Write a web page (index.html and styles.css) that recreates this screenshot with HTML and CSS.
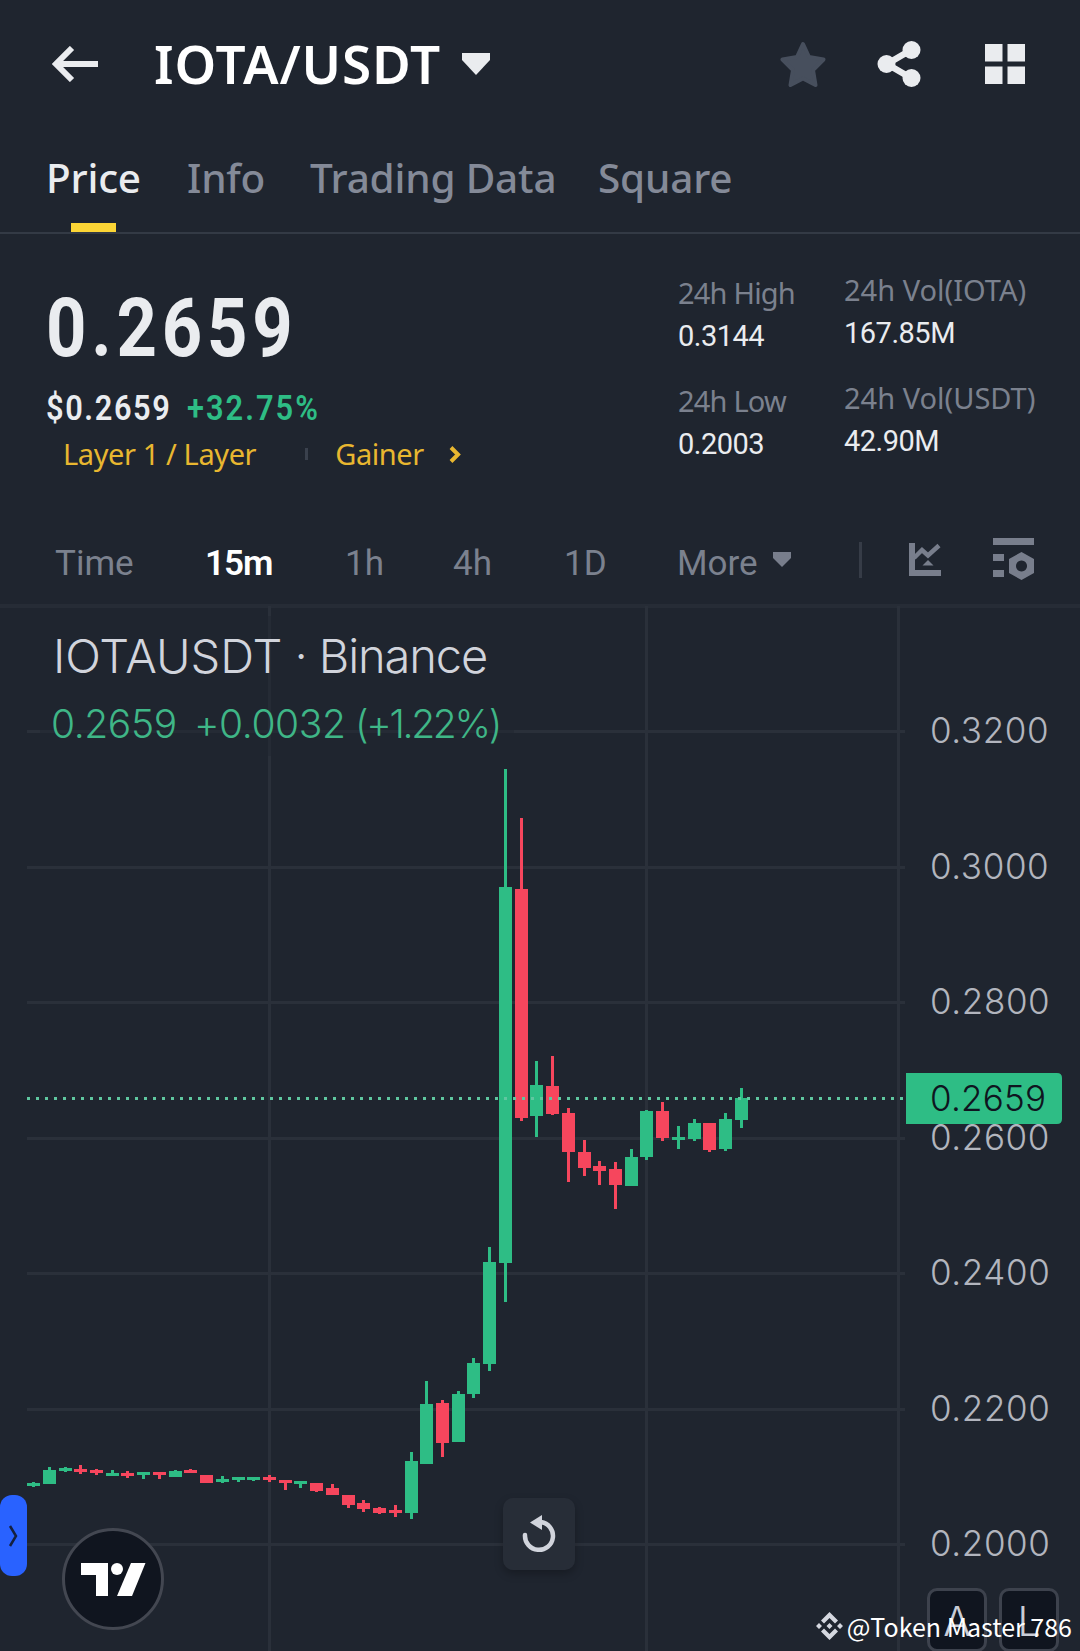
FILE: index.html
```
<!DOCTYPE html>
<html lang="en">
  <head>
    <meta charset="UTF-8" />
    <meta name="viewport" content="width=device-width, initial-scale=1.0" />
    <title>IOTA/USDT</title>
    <link rel="stylesheet" href="styles.css">
  </head>
  <body>
    <header class="header">
      <svg class="back" width="46" height="36" viewBox="0 0 46 36">
        <path d="M20 2 L4 18 L20 34 M4 18 H46" fill="none" stroke="#eaecef" stroke-width="6" />
      </svg>
      <h1 class="pair">IOTA/USDT</h1>
      <svg class="caret" width="28" height="22" viewBox="0 0 28 22">
        <path d="M0 0 H28 V7 L14 22 L0 7 Z" fill="#eaecef" />
      </svg>
      <div class="actions">
        <svg width="46" height="48" viewBox="0 0 46 48">
          <path d="M23 4 L29 17 L43.500 19.500 L33 30 L35.500 45 L23 38.500 L10.500 45 L13 30 L2.500 19.500 L17 17 Z" fill="#474f5d" stroke="#474f5d" stroke-width="4" stroke-linejoin="round" />
        </svg>
        <svg width="44" height="48" viewBox="0 0 44 48">
          <path d="M34 10 L10 24 L34 38" fill="none" stroke="#eaecef" stroke-width="6.500" />
          <circle cx="34.500" cy="10" r="9" fill="#eaecef" />
          <circle cx="9.500" cy="24" r="9" fill="#eaecef" />
          <circle cx="34.500" cy="38" r="9" fill="#eaecef" />
        </svg>
        <svg width="40" height="40" viewBox="0 0 40 40">
          <path d="M0 0h17.500v17.500H0zM22.500 0H40v17.500H22.500zM0 22.500h17.500V40H0zM22.500 22.500H40V40H22.500z" fill="#eaecef" />
        </svg>
      </div>
    </header>

    <nav class="tabs">
      <a class="tab active">Price</a>
      <a class="tab">Info</a>
      <a class="tab">Trading Data</a>
      <a class="tab">Square</a>
    </nav>

    <section class="summary">
      <div class="quote">
        <div class="last-price">0.2659</div>
        <div class="sub-price">
          <span class="usd">$0.2659</span>
          <span class="change">+32.75%</span>
        </div>
        <div class="tags">
          <span>Layer 1 / Layer</span>
          <i class="tag-sep"></i>
          <span>Gainer</span>
          <svg width="12" height="17" viewBox="0 0 12 17"><path d="M2 1.500 L9 8.500 L2 15.500" fill="none" stroke="#e8b730" stroke-width="4" /></svg>
        </div>
      </div>
      <div class="stats">
        <div class="stat-col">
          <div class="stat"><label>24h High</label><b>0.3144</b></div>
          <div class="stat"><label>24h Low</label><b>0.2003</b></div>
        </div>
        <div class="stat-col">
          <div class="stat"><label>24h Vol(IOTA)</label><b>167.85M</b></div>
          <div class="stat"><label>24h Vol(USDT)</label><b>42.90M</b></div>
        </div>
      </div>
    </section>

    <div class="intervals">
      <span>Time</span>
      <span class="active">15m</span>
      <span>1h</span>
      <span>4h</span>
      <span>1D</span>
      <span>More</span>
      <svg width="18" height="15" viewBox="0 0 18 15"><path d="M0 0 H18 V6 L9 15 L0 6 Z" fill="#787e8c" /></svg>
      <i class="bar-sep"></i>
      <svg width="33" height="33" viewBox="0 0 33 33" fill="#787e8c">
        <path d="M0 0 H6 V27 H32 V33 H0 Z" />
        <path d="M5 15 L13 7 L19 12.500 L30 2.500" fill="none" stroke="#787e8c" stroke-width="4.500" />
        <path d="M19 17 L24.500 22.500 H13.500 Z" />
      </svg>
      <svg width="41" height="43" viewBox="0 0 41 43" fill="#787e8c">
        <path d="M0 0 H41 V7 H0 Z M0 16 H11 V23 H0 Z M0 32 H11 V39 H0 Z" />
        <path fill-rule="evenodd" d="M28.500 14 L41 21 V35 L28.500 42 L16 35 V21 Z M28.500 22.500 a5.500 5.500 0 1 0 .01 0 Z" />
      </svg>
    </div>

    <main class="chart">
      <svg width="1080" height="1047" viewBox="0 604 1080 1047">
        <path class="top-line" d="M0 606 H1080" />
        <g class="grid">
          <path d="M269.500 606 V1651 M646.500 606 V1651 M898.500 606 V1651" />
          <path d="M27 731.500 H905 M27 867.500 H905 M27 1002.500 H905 M27 1138.500 H905 M27 1273.500 H905 M27 1409.500 H905 M27 1544.500 H905" />
        </g>
        <rect class="legend-bg" x="40" y="616" width="474" height="140" />
        <text class="symbol" x="53" y="673">IOTAUSDT<tspan class="exchange"> · Binance</tspan></text>
        <g class="ohlc">
          <text x="51" y="738">0.2659</text>
          <text x="194" y="738">+0.0032</text>
          <text class="percent" x="355" y="738">(+1.22%)</text>
        </g>
        <g id="candles"></g>
        <path class="last-line" d="M27 1098.500 H904" />
        <g class="axis">
          <text x="930" y="743">0.3200</text>
          <text x="930" y="879">0.3000</text>
          <text x="930" y="1014">0.2800</text>
          <text x="930" y="1150">0.2600</text>
          <text x="930" y="1285">0.2400</text>
          <text x="930" y="1421">0.2200</text>
          <text x="930" y="1556">0.2000</text>
        </g>
        <path class="last-tag" d="M906 1073 H1057 q5 0 5 5 V1119 q0 5 -5 5 H906 Z" />
        <text class="last-text" x="930" y="1111">0.2659</text>
      </svg>

      <div class="drawer">
        <svg width="10" height="24" viewBox="0 0 10 24"><path d="M2 2 L8 12 L2 22" fill="none" stroke="#14203f" stroke-width="2.500" /></svg>
      </div>
      <div class="tv-logo">
        <svg width="65" height="33" viewBox="0 0 65 33" fill="#fff">
          <path d="M0 0 H27 V33 H15 V12 H0 Z" />
          <circle cx="36" cy="6" r="6" />
          <path d="M50 0 H64.500 L51 33 H36 Z" />
        </svg>
      </div>
      <div class="reset">
        <svg width="34" height="38" viewBox="0 0 34 38">
          <path d="M3 20 A14 14 0 1 0 19 7" fill="none" stroke="#d1d4dc" stroke-width="4.500" stroke-linecap="round" />
          <path d="M8 7.500 L20 0 V15 Z" fill="#d1d4dc" />
        </svg>
      </div>
      <div class="scale-btns">
        <div class="scale-btn">A</div>
        <div class="scale-btn">L</div>
      </div>
      <div class="watermark">
        <svg width="27" height="28" viewBox="-13.500 -14 27 28" fill="#d5d8e0">
          <path d="M0 -14 L8.500 -5.500 L5.500 -2.500 L0 -8 L-5.500 -2.500 L-8.500 -5.500 Z" />
          <path d="M0 14 L8.500 5.500 L5.500 2.500 L0 8 L-5.500 2.500 L-8.500 5.500 Z" />
          <path d="M-10.500 -3 L-7.500 0 L-10.500 3 L-13.500 0 Z M10.500 -3 L13.500 0 L10.500 3 L7.500 0 Z M0 -3 L3 0 L0 3 L-3 0 Z" />
        </svg>
        <span>@Token Master 786</span>
      </div>
    </main>

    <script src="chart.js"></script>
  </body>
</html>
```
FILE: styles.css
```
* {
  box-sizing: border-box;
}
body {
  margin: 0;
  width: 1080px;
  height: 1651px;
  overflow: hidden;
  background-color: #1f252f;
  color: #eaecef;
  font-family: "Noto Sans", sans-serif;
}
svg {
  display: block;
  flex: none;
}
.header {
  display: flex;
  align-items: center;
  height: 128px;
  padding: 0 55px 0 52px;
}
.pair {
  margin: 0 0 0 56px;
  font-size: 53px;
  font-weight: 600;
  line-height: 72px;
  letter-spacing: 0.9px;
  color: #fff;
}
.caret {
  margin-left: 21px;
}
.actions {
  display: flex;
  align-items: center;
  margin-left: auto;
}
.actions svg:nth-child(2) {
  margin: 0 64px 0 51px;
}
.tabs {
  display: grid;
  grid-template-columns: 141px 123px 288px 200px;
  height: 106px;
  padding-left: 46px;
  border-bottom: 2px solid #333a45;
}
.tab {
  position: relative;
  padding-top: 1px;
  font-size: 40.5px;
  font-weight: 500;
  line-height: 98px;
  letter-spacing: -0.2px;
  color: #848a98;
  white-space: nowrap;
}
.tab.active {
  color: #eaecef;
}
.tab.active::after {
  content: "";
  position: absolute;
  left: 25px;
  bottom: 0;
  width: 45px;
  height: 9px;
  background-color: #fcd535;
}
.summary {
  display: flex;
  height: 288px;
  padding-left: 46px;
}
.quote {
  width: 632px;
  padding-top: 52px;
}
.last-price {
  font-family: Roboto, sans-serif;
  font-size: 82px;
  font-weight: 700;
  line-height: 84px;
  letter-spacing: 5.6px;
  transform: scaleX(0.86);
  transform-origin: left;
}
.sub-price {
  display: flex;
  margin-top: 17px;
  font-family: Roboto, sans-serif;
  font-size: 35px;
  font-weight: 600;
  line-height: 44px;
}
.usd,
.change {
  width: 141px;
  letter-spacing: 1.8px;
  transform: scaleX(0.88);
  transform-origin: left;
}
.change {
  letter-spacing: 2.3px;
  color: #2ebd85;
}
.tags {
  display: flex;
  align-items: center;
  margin-top: 3px;
  padding-left: 17px;
  font-size: 29px;
  line-height: 40px;
  letter-spacing: -0.4px;
  color: #e8b730;
}
.tag-sep {
  width: 3px;
  height: 12px;
  margin: 0 27px 0 49px;
  background-color: #3a414d;
}
.tags svg {
  margin-left: 25px;
}
.stats {
  display: flex;
  padding-top: 38px;
}
.stat-col {
  width: 166px;
}
.stat-col:first-child label {
  letter-spacing: -0.8px;
}
.stat-col:last-child {
  margin-top: -3px;
}
.stat {
  display: flex;
  flex-direction: column;
  align-items: flex-start;
  height: 108px;
  font-size: 29px;
  line-height: 42px;
  white-space: nowrap;
}
.stat label {
  color: #7b818e;
}
.stat b {
  padding-top: 1px;
  font-family: Roboto, sans-serif;
  font-weight: 400;
  letter-spacing: -0.5px;
}
.intervals {
  display: grid;
  grid-template-columns: 150px 140px 108px 111px 113px 96px 86px 50px 84px 42px;
  align-items: center;
  height: 82px;
  padding-left: 55px;
  font-family: Roboto, sans-serif;
  font-size: 35px;
  color: #7b818e;
}
.intervals .active {
  font-weight: 600;
  letter-spacing: -1px;
  color: #fff;
}
.intervals svg,
.bar-sep {
  margin-bottom: 7px;
}
.bar-sep {
  width: 3px;
  height: 36px;
  background-color: #363c47;
}
.chart {
  position: relative;
  height: 1047px;
  font-family: Inter, sans-serif;
  font-weight: 300;
}
.top-line {
  stroke: #262c36;
  stroke-width: 4;
}
.grid path {
  fill: none;
  stroke: #2a303a;
  stroke-width: 3;
}
.legend-bg {
  fill: #1f252f;
  fill-opacity: 0.5;
}
.symbol {
  font-size: 47px;
  fill: #d1d4dc;
}
.exchange {
  letter-spacing: -1.1px;
}
.ohlc {
  font-size: 39px;
  letter-spacing: -0.4px;
  fill: #3fb687;
}
.ohlc .percent {
  letter-spacing: -2.3px;
}
.axis {
  font-size: 35px;
  letter-spacing: 0.6px;
  fill: #b2b5be;
}
.last-line {
  stroke: #5fc7a0;
  stroke-width: 3;
  stroke-dasharray: 3 6;
}
.up {
  fill: #2ebd85;
}
.down {
  fill: #f6465d;
}
.last-tag {
  fill: #2ebd85;
}
.last-text {
  font-size: 35px;
  letter-spacing: 0.2px;
  fill: #0f1520;
}
.drawer {
  position: absolute;
  left: 0;
  top: 891px;
  display: flex;
  align-items: center;
  width: 27px;
  height: 81px;
  padding-left: 8px;
  border-radius: 12px;
  background-color: #2962ff;
}
.tv-logo {
  position: absolute;
  left: 62px;
  top: 924px;
  display: flex;
  align-items: center;
  justify-content: center;
  width: 102px;
  height: 102px;
  border: 3px solid #434751;
  border-radius: 50%;
  background-color: #10151f;
}
.reset {
  position: absolute;
  left: 503px;
  top: 894px;
  display: flex;
  align-items: center;
  justify-content: center;
  width: 72px;
  height: 72px;
  border-radius: 10px;
  background-color: #272d37;
  box-shadow: 0 4px 8px rgba(0, 0, 0, 0.25);
}
.scale-btns {
  position: absolute;
  left: 927px;
  top: 984px;
  display: flex;
  gap: 12px;
}
.scale-btn {
  width: 60px;
  height: 64px;
  border: 3px solid #3d424d;
  border-radius: 10px;
  background-color: #10151f;
  font-size: 41px;
  line-height: 60px;
  text-align: center;
  color: #c9ccd6;
}
.watermark {
  position: absolute;
  right: 8px;
  bottom: 6px;
  display: flex;
  align-items: center;
  gap: 4px;
  font-family: "Noto Sans CJK SC", sans-serif;
  font-size: 25px;
  font-weight: 400;
  line-height: 38px;
  color: #fff;
}
```
FILE: chart.js
```
// x, direction, high, low, body top, body bottom
const candles = [
  [27, "up", 1482, 1487, 1483, 1486],
  [43, "up", 1467, 1484, 1470, 1484],
  [59, "up", 1467, 1472, 1468, 1471],
  [74, "down", 1465, 1474, 1469, 1472],
  [90, "down", 1469, 1475, 1470, 1473],
  [106, "up", 1470, 1476, 1473, 1476],
  [121, "down", 1471, 1478, 1473, 1476],
  [137, "up", 1472, 1479, 1472, 1475],
  [153, "down", 1472, 1479, 1472, 1475],
  [169, "up", 1470, 1477, 1471, 1477],
  [184, "down", 1469, 1473, 1470, 1473],
  [200, "down", 1475, 1483, 1475, 1483],
  [216, "up", 1476, 1483, 1479, 1482],
  [232, "up", 1477, 1482, 1477, 1480],
  [247, "up", 1477, 1481, 1477, 1480],
  [263, "down", 1475, 1482, 1477, 1480],
  [279, "down", 1480, 1490, 1480, 1483],
  [294, "up", 1481, 1488, 1481, 1484],
  [310, "down", 1483, 1492, 1483, 1491],
  [326, "down", 1484, 1495, 1488, 1495],
  [342, "down", 1495, 1508, 1495, 1505],
  [357, "down", 1500, 1512, 1503, 1509],
  [373, "down", 1507, 1514, 1508, 1513],
  [389, "down", 1505, 1517, 1510, 1513],
  [405, "up", 1452, 1519, 1461, 1513],
  [420, "up", 1381, 1464, 1404, 1464],
  [436, "down", 1400, 1457, 1403, 1443],
  [452, "up", 1391, 1442, 1394, 1442],
  [467, "up", 1358, 1398, 1363, 1394],
  [483, "up", 1247, 1371, 1262, 1364],
  [499, "up", 769, 1302, 887, 1263],
  [515, "down", 818, 1121, 889, 1118],
  [530, "up", 1061, 1137, 1085, 1116],
  [546, "down", 1056, 1115, 1086, 1114],
  [562, "down", 1108, 1182, 1113, 1152],
  [578, "down", 1140, 1176, 1152, 1168],
  [593, "down", 1161, 1185, 1166, 1171],
  [609, "down", 1162, 1209, 1169, 1185],
  [625, "up", 1149, 1186, 1157, 1186],
  [640, "up", 1110, 1160, 1111, 1157],
  [656, "down", 1102, 1141, 1111, 1138],
  [672, "up", 1126, 1149, 1137, 1140],
  [688, "up", 1119, 1141, 1123, 1139],
  [703, "down", 1123, 1152, 1123, 1150],
  [719, "up", 1113, 1151, 1119, 1149],
  [735, "up", 1088, 1128, 1098, 1120],
];

document.getElementById("candles").innerHTML = candles
  .map(
    ([x, dir, high, low, top, bottom]) =>
      `<g class="${dir}"><rect x="${x + 5}" y="${high}" width="3" height="${low - high}" /><rect x="${x}" y="${top}" width="13" height="${bottom - top}" /></g>`
  )
  .join("");
```
